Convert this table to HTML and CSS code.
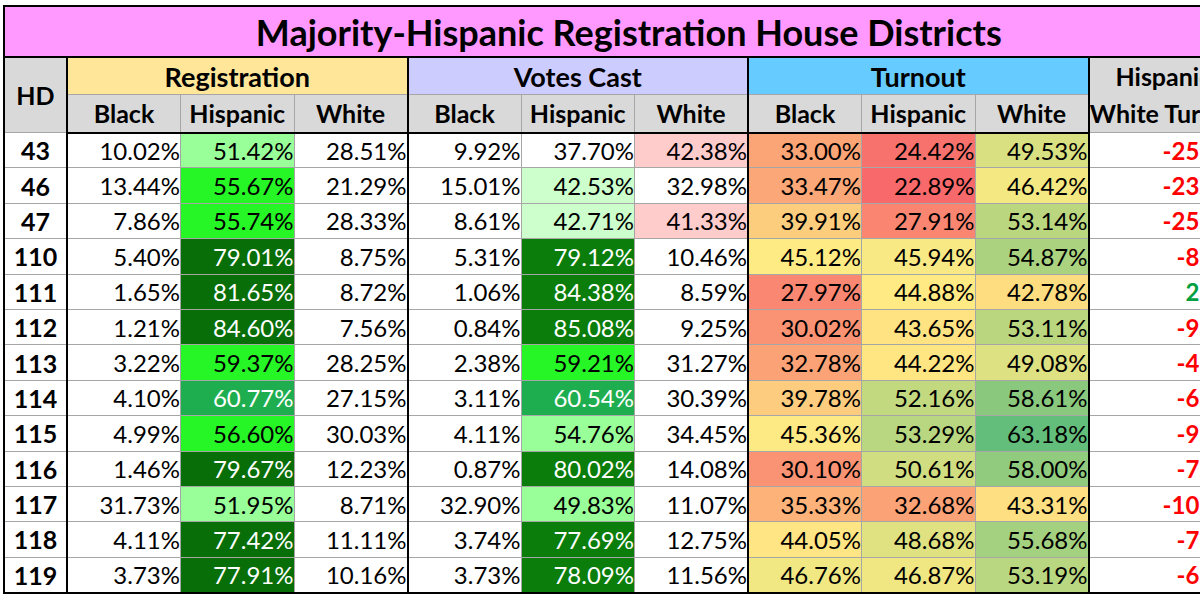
FILE: index.html
```html
<!DOCTYPE html>
<html lang="en">
<head>
<meta charset="utf-8">
<title>Majority-Hispanic Registration House Districts</title>
<link rel="stylesheet" href="styles.css">
</head>
<body>
<table class="sheet">
  <colgroup>
    <col class="c-hd">
    <col class="c-num"><col class="c-num"><col class="c-num">
    <col class="c-num"><col class="c-num"><col class="c-num">
    <col class="c-num"><col class="c-num"><col class="c-num">
    <col class="c-diff">
  </colgroup>
  <thead>
    <tr class="r-title"><th colspan="11" class="title">Majority-Hispanic Registration House Districts</th></tr>
    <tr class="r-group">
      <th rowspan="2" class="hd gl">HD</th>
      <th colspan="3" class="grp reg gl">Registration</th>
      <th colspan="3" class="grp votes gl">Votes Cast</th>
      <th colspan="3" class="grp turn gl">Turnout</th>
      <th rowspan="2" class="diffh gl">Hispanic -<br>White Turnout</th>
    </tr>
    <tr class="r-sub">
      <th class="sub gl">Black</th><th class="sub">Hispanic</th><th class="sub">White</th>
      <th class="sub gl">Black</th><th class="sub">Hispanic</th><th class="sub">White</th>
      <th class="sub gl">Black</th><th class="sub">Hispanic</th><th class="sub">White</th>
    </tr>
  </thead>
  <tbody>
    <tr><th class="hd gl">43</th><td class="gl">10.02%</td><td class="g2">51.42%</td><td>28.51%</td><td class="gl">9.92%</td><td>37.70%</td><td class="pk">42.38%</td><td class="gl sc">33.00%</td><td class="sc">24.42%</td><td class="sc">49.53%</td><td class="gl neg">-25.11%</td></tr>
    <tr><th class="hd gl">46</th><td class="gl">13.44%</td><td class="g3">55.67%</td><td>21.29%</td><td class="gl">15.01%</td><td class="g1">42.53%</td><td>32.98%</td><td class="gl sc">33.47%</td><td class="sc">22.89%</td><td class="sc">46.42%</td><td class="gl neg">-23.53%</td></tr>
    <tr><th class="hd gl">47</th><td class="gl">7.86%</td><td class="g3">55.74%</td><td>28.33%</td><td class="gl">8.61%</td><td class="g1">42.71%</td><td class="pk">41.33%</td><td class="gl sc">39.91%</td><td class="sc">27.91%</td><td class="sc">53.14%</td><td class="gl neg">-25.23%</td></tr>
    <tr><th class="hd gl">110</th><td class="gl">5.40%</td><td class="g5">79.01%</td><td>8.75%</td><td class="gl">5.31%</td><td class="g5v">79.12%</td><td>10.46%</td><td class="gl sc">45.12%</td><td class="sc">45.94%</td><td class="sc">54.87%</td><td class="gl neg">-8.93%</td></tr>
    <tr><th class="hd gl">111</th><td class="gl">1.65%</td><td class="g5">81.65%</td><td>8.72%</td><td class="gl">1.06%</td><td class="g5v">84.38%</td><td>8.59%</td><td class="gl sc">27.97%</td><td class="sc">44.88%</td><td class="sc">42.78%</td><td class="gl pos">2.10%</td></tr>
    <tr><th class="hd gl">112</th><td class="gl">1.21%</td><td class="g5">84.60%</td><td>7.56%</td><td class="gl">0.84%</td><td class="g5v">85.08%</td><td>9.25%</td><td class="gl sc">30.02%</td><td class="sc">43.65%</td><td class="sc">53.11%</td><td class="gl neg">-9.46%</td></tr>
    <tr><th class="hd gl">113</th><td class="gl">3.22%</td><td class="g3">59.37%</td><td>28.25%</td><td class="gl">2.38%</td><td class="g3">59.21%</td><td>31.27%</td><td class="gl sc">32.78%</td><td class="sc">44.22%</td><td class="sc">49.08%</td><td class="gl neg">-4.86%</td></tr>
    <tr><th class="hd gl">114</th><td class="gl">4.10%</td><td class="g4">60.77%</td><td>27.15%</td><td class="gl">3.11%</td><td class="g4">60.54%</td><td>30.39%</td><td class="gl sc">39.78%</td><td class="sc">52.16%</td><td class="sc">58.61%</td><td class="gl neg">-6.45%</td></tr>
    <tr><th class="hd gl">115</th><td class="gl">4.99%</td><td class="g3">56.60%</td><td>30.03%</td><td class="gl">4.11%</td><td class="g2">54.76%</td><td>34.45%</td><td class="gl sc">45.36%</td><td class="sc">53.29%</td><td class="sc">63.18%</td><td class="gl neg">-9.89%</td></tr>
    <tr><th class="hd gl">116</th><td class="gl">1.46%</td><td class="g5">79.67%</td><td>12.23%</td><td class="gl">0.87%</td><td class="g5v">80.02%</td><td>14.08%</td><td class="gl sc">30.10%</td><td class="sc">50.61%</td><td class="sc">58.00%</td><td class="gl neg">-7.39%</td></tr>
    <tr><th class="hd gl">117</th><td class="gl">31.73%</td><td class="g2">51.95%</td><td>8.71%</td><td class="gl">32.90%</td><td class="g2">49.83%</td><td>11.07%</td><td class="gl sc">35.33%</td><td class="sc">32.68%</td><td class="sc">43.31%</td><td class="gl neg">-10.63%</td></tr>
    <tr><th class="hd gl">118</th><td class="gl">4.11%</td><td class="g5">77.42%</td><td>11.11%</td><td class="gl">3.74%</td><td class="g5v">77.69%</td><td>12.75%</td><td class="gl sc">44.05%</td><td class="sc">48.68%</td><td class="sc">55.68%</td><td class="gl neg">-7.00%</td></tr>
    <tr><th class="hd gl">119</th><td class="gl">3.73%</td><td class="g5">77.91%</td><td>10.16%</td><td class="gl">3.73%</td><td class="g5v">78.09%</td><td>11.56%</td><td class="gl sc">46.76%</td><td class="sc">46.87%</td><td class="sc">53.19%</td><td class="gl neg">-6.32%</td></tr>
  </tbody>
</table>
<script src="script.js"></script>
</body>
</html>
```

FILE: styles.css
```css
html, body {
  margin: 0;
  padding: 0;
  background: #ffffff;
  overflow: hidden;
}

body {
  padding: 5px 0 0 3px;
  font-family: Lato, "Open Sans", "Liberation Sans", sans-serif;
  color: #000000;
}

.sheet {
  border-collapse: collapse;
  table-layout: fixed;
  width: 1250px;
  border: 2px solid #000000;
}

.c-hd { width: 63px; }
.c-num { width: 113.5px; }
.c-diff { width: 165px; }

.sheet th,
.sheet td {
  border: 1px solid #a6a6a6;
  padding: 0;
  white-space: nowrap;
  overflow: hidden;
}

.sheet .gl { border-left: 2px solid #000000; }

.r-title { height: 51px; }
.title {
  background: #ff99ff;
  font-size: 36px;
  font-weight: 700;
  text-align: center;
  border-bottom: 2px solid #000000 !important;
  padding-top: 2px;
}

.r-group { height: 37px; }
.r-sub { height: 37px; }
.r-sub th { border-bottom: 2px solid #000000; }

.grp {
  font-size: 27px;
  font-weight: 700;
  text-align: center;
}
.reg { background: #ffe699; }
.votes { background: #ccccff; }
.turn { background: #66ccff; }

.hd {
  background: #d9d9d9;
  font-size: 25px;
  font-weight: 700;
  text-align: center;
}
tbody .hd { background: #ffffff; }

.sub {
  background: #d9d9d9;
  font-size: 25px;
  font-weight: 700;
  text-align: center;
}

.diffh {
  background: #d9d9d9;
  font-size: 25px;
  font-weight: 700;
  line-height: 37px;
  text-align: center;
  border-bottom: 2px solid #000000;
}

tbody tr { height: 35.4px; }

tbody td {
  font-size: 24px;
  text-align: right;
  padding-right: 7px;
}

.g1 { background: #ccffcc; }
.g2 { background: #99ff99; }
.g3 { background: #26f526; }
.g4 { background: #1fae4f; color: #ffffff; }
.g5 { background: #086e08; color: #ffffff; }
.g5v { background: #0a7d0a; color: #ffffff; }
.pk { background: #ffcccc; }

.neg, .pos {
  font-weight: 700;
  padding-right: 10px;
}
.neg { color: #ff0000; }
.pos { color: #00a040; }
```

FILE: script.js
```js
(function () {
  var cells = Array.prototype.slice.call(document.querySelectorAll('td.sc'));
  var vals = cells.map(function (c) { return parseFloat(c.textContent); });
  var sorted = vals.slice().sort(function (a, b) { return a - b; });
  var min = sorted[0];
  var max = sorted[sorted.length - 1];
  var mid = sorted[Math.floor(sorted.length / 2)];
  var red = [248, 105, 107], yel = [255, 235, 132], grn = [99, 190, 123];
  function mix(a, b, t) {
    return a.map(function (x, i) { return Math.round(x + (b[i] - x) * t); });
  }
  cells.forEach(function (c, i) {
    var v = vals[i], col;
    if (v <= mid) col = mix(red, yel, (v - min) / (mid - min));
    else col = mix(yel, grn, (v - mid) / (max - mid));
    c.style.backgroundColor = 'rgb(' + col.join(',') + ')';
  });
})();
```
